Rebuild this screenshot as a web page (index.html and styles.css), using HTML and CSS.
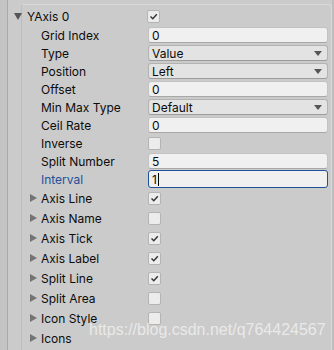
FILE: index.html
```html
<!DOCTYPE html>
<html>
<head>
    <link rel="stylesheet" href="styles.css">
</head>
<body>
    <div class="inspector">
        <div class="side-strip"></div>
        <div class="panel">
            <div class="header">
                <span class="arrow-down"></span>
                <span class="header-label">YAxis 0</span>
                <span class="checkbox checked">
                    <svg width="11" height="11" viewBox="0 0 11 11"><polyline points="2.5,5.5 4.8,7.8 8.8,3.2" fill="none" stroke="#333" stroke-width="1.4"/></svg>
                </span>
            </div>

            <div class="row"><span class="label">Grid Index</span><span class="field">0</span></div>
            <div class="row"><span class="label">Type</span><span class="field popup">Value<span class="popup-arrow"></span></span></div>
            <div class="row"><span class="label">Position</span><span class="field popup">Left<span class="popup-arrow"></span></span></div>
            <div class="row"><span class="label">Offset</span><span class="field">0</span></div>
            <div class="row"><span class="label">Min Max Type</span><span class="field popup">Default<span class="popup-arrow"></span></span></div>
            <div class="row"><span class="label">Ceil Rate</span><span class="field">0</span></div>
            <div class="row"><span class="label">Inverse</span><span class="checkbox"></span></div>
            <div class="row"><span class="label">Split Number</span><span class="field">5</span></div>
            <div class="row"><span class="label focused-label">Interval</span><span class="field focused">1<span class="caret"></span></span></div>

            <div class="foldout">
                <span class="arrow-right"></span><span class="label">Axis Line</span>
                <span class="checkbox checked"><svg width="11" height="11" viewBox="0 0 11 11"><polyline points="2.5,5.5 4.8,7.8 8.8,3.2" fill="none" stroke="#333" stroke-width="1.4"/></svg></span>
            </div>
            <div class="foldout">
                <span class="arrow-right"></span><span class="label">Axis Name</span>
                <span class="checkbox"></span>
            </div>
            <div class="foldout">
                <span class="arrow-right"></span><span class="label">Axis Tick</span>
                <span class="checkbox checked"><svg width="11" height="11" viewBox="0 0 11 11"><polyline points="2.5,5.5 4.8,7.8 8.8,3.2" fill="none" stroke="#333" stroke-width="1.4"/></svg></span>
            </div>
            <div class="foldout">
                <span class="arrow-right"></span><span class="label">Axis Label</span>
                <span class="checkbox checked"><svg width="11" height="11" viewBox="0 0 11 11"><polyline points="2.5,5.5 4.8,7.8 8.8,3.2" fill="none" stroke="#333" stroke-width="1.4"/></svg></span>
            </div>
            <div class="foldout">
                <span class="arrow-right"></span><span class="label">Split Line</span>
                <span class="checkbox checked"><svg width="11" height="11" viewBox="0 0 11 11"><polyline points="2.5,5.5 4.8,7.8 8.8,3.2" fill="none" stroke="#333" stroke-width="1.4"/></svg></span>
            </div>
            <div class="foldout">
                <span class="arrow-right"></span><span class="label">Split Area</span>
                <span class="checkbox"></span>
            </div>
            <div class="foldout">
                <span class="arrow-right"></span><span class="label">Icon Style</span>
                <span class="checkbox"></span>
            </div>
            <div class="foldout">
                <span class="arrow-right"></span><span class="label">Icons</span>
            </div>
        </div>
        <div class="edge-strip"></div>
    </div>

    <div class="watermark">https://blog.csdn.net/q764424567</div>
</body>
</html>
```

FILE: styles.css
```css
body {
    margin: 0;
    width: 334px;
    height: 350px;
    overflow: hidden;
    background: #cbcbcb;
    font-family: "Inter", "Noto Sans", sans-serif;
    font-size: 12px;
    color: #0c0c0c;
    position: relative;
}

.inspector {
    display: flex;
    height: 350px;
}

.side-strip {
    width: 7px;
    background: #c4c4c4;
    border-right: 1px solid #a9a9a9;
    flex: none;
}

.panel {
    margin-left: 13px;
    margin-top: 4px;
    width: 309px;
    border-top: 1px solid #d9d9d9;
    border-left: 1px solid #bcbcbc;
    border-right: 1px solid #d9d9d9;
    border-top-left-radius: 3px;
    border-top-right-radius: 3px;
    flex: none;
}

.edge-strip {
    width: 2px;
    background: #bdbdbd;
    flex: none;
}

.header {
    display: flex;
    align-items: center;
    height: 20px;
    margin-top: 1px;
    margin-left: -8px;
}

.arrow-down {
    width: 0;
    height: 0;
    border-left: 4px solid transparent;
    border-right: 4px solid transparent;
    border-top: 7px solid #555;
    margin-right: 5px;
}

.header-label {
    width: 120px;
}

.row {
    display: flex;
    align-items: center;
    height: 18px;
    padding-left: 19px;
}

.foldout {
    display: flex;
    align-items: center;
    height: 20px;
    padding-left: 8px;
}

.arrow-right {
    width: 0;
    height: 0;
    border-top: 4px solid transparent;
    border-bottom: 4px solid transparent;
    border-left: 7px solid #747474;
    margin-right: 4px;
}

.label {
    width: 107px;
    flex: none;
    white-space: nowrap;
}

.focused-label {
    color: #1f4f9a;
}

.field {
    display: flex;
    align-items: center;
    box-sizing: border-box;
    width: 180px;
    height: 16px;
    padding-left: 3px;
    background: #f0f0f0;
    border: 1px solid #c2c2c2;
    border-bottom-color: #a8a8a8;
    border-radius: 3px;
}

.popup {
    background: #e3e3e3;
    border-color: #b3b3b3;
    border-bottom-color: #9c9c9c;
    justify-content: space-between;
    padding-right: 5px;
}

.popup-arrow {
    width: 0;
    height: 0;
    border-left: 4px solid transparent;
    border-right: 4px solid transparent;
    border-top: 5px solid #555;
}

.focused {
    border: 1px solid #1e5196;
    height: 18px;
}

.caret {
    width: 1px;
    height: 13px;
    background: #000;
    margin-left: 1px;
}

.checkbox {
    display: flex;
    align-items: center;
    justify-content: center;
    box-sizing: border-box;
    width: 13px;
    height: 13px;
    background: #ececec;
    border: 1px solid #b4b4b4;
    border-radius: 2px;
    flex: none;
}

.watermark {
    position: absolute;
    left: 89px;
    top: 321px;
    font-family: "Liberation Sans", Arial, sans-serif;
    font-size: 16px;
    color: rgba(255, 255, 255, 0.6);
    white-space: nowrap;
}
```
